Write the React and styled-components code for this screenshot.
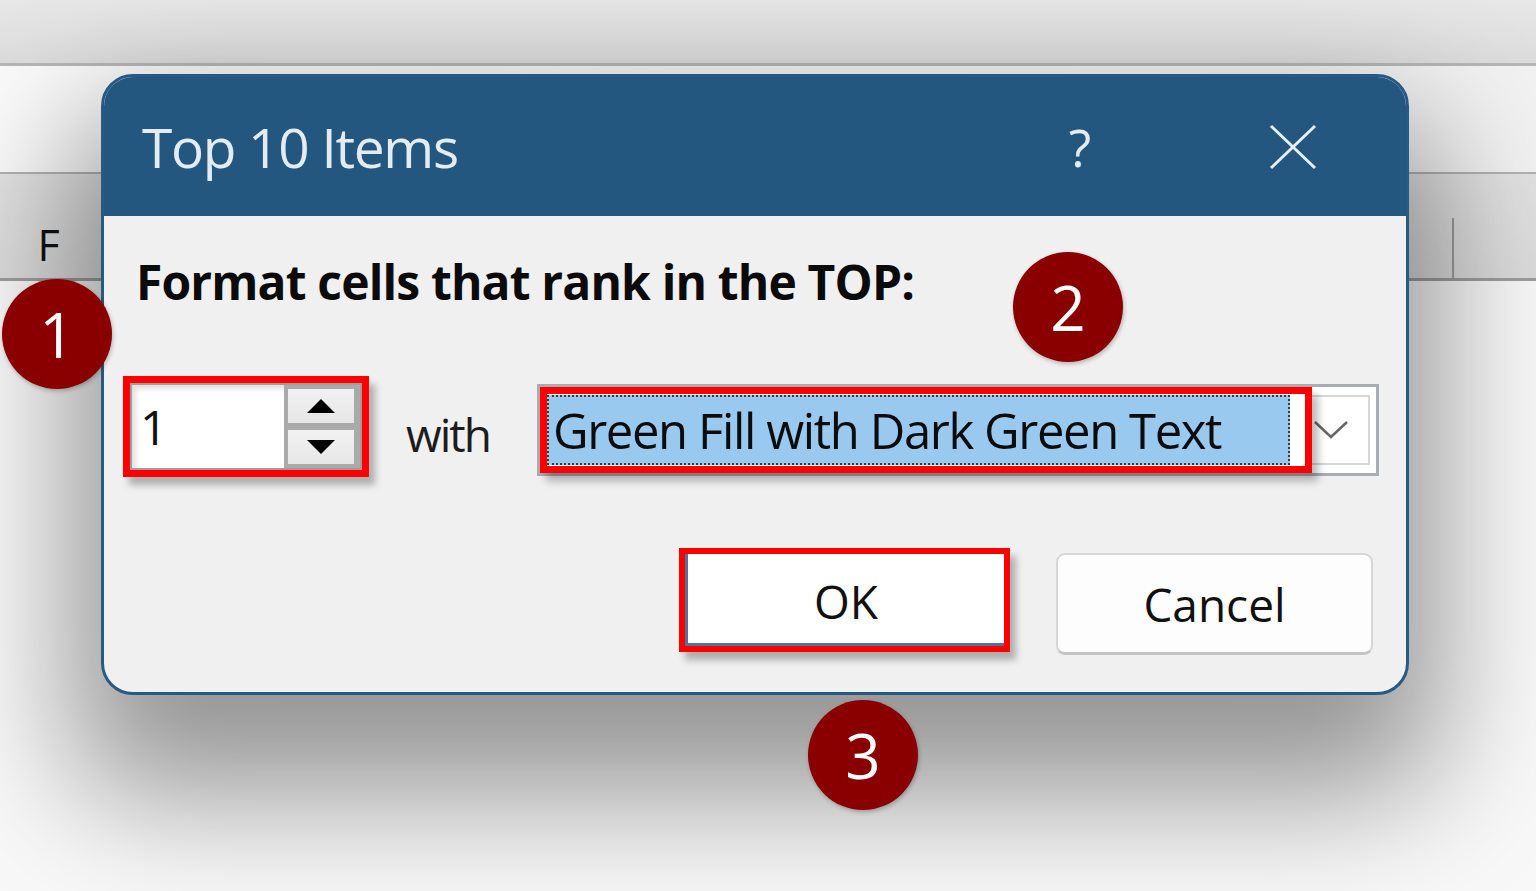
import React from "react";
import styled, { createGlobalStyle } from "styled-components";

const GlobalStyle = createGlobalStyle`
  html, body { margin: 0; padding: 0; }
  body {
    width: 1536px;
    height: 891px;
    overflow: hidden;
    background: #f6f6f6;
    font-family: "Open Sans", "Noto Sans", sans-serif;
  }
`;

const Page = styled.div`
  position: relative;
  width: 1536px;
  height: 891px;
  overflow: hidden;
  display: flex;
  flex-direction: column;
`;

const Ribbon = styled.div`
  height: 63px;
  flex-shrink: 0;
  background: linear-gradient(180deg, #e7e7e7 0%, #dcdcdc 100%);
  border-bottom: 3px solid #b6b6b6;
`;

const FormulaRow = styled.div`
  height: 106px;
  flex-shrink: 0;
  background: linear-gradient(90deg, #fafafa 0%, #f2f2f2 100%);
  border-bottom: 2px solid #b2b2b2;
`;

const HeaderRow = styled.div`
  height: 104px;
  flex-shrink: 0;
  display: flex;
  align-items: flex-end;
  background: linear-gradient(180deg, #e2e2e2 0%, #dcdcdc 100%);
  border-bottom: 3px solid #9e9e9e;
`;

const ColHeader = styled.div`
  width: 97px;
  text-align: center;
  font-size: 43px;
  line-height: 1;
  color: #111;
  padding-bottom: 12px;
`;

const HeaderCell = styled.div`
  margin-left: auto;
  width: 82px;
  height: 60px;
  border-left: 2px solid #9c9c9c;
`;

const Grid = styled.div`
  flex: 1;
  background: #f8f8f8;
`;

const Dialog = styled.div`
  position: absolute;
  left: 101px;
  top: 74px;
  width: 1308px;
  height: 621px;
  box-sizing: border-box;
  border: 3px solid #265a84;
  border-radius: 32px;
  background: #f0f0f0;
  overflow: hidden;
  display: flex;
  flex-direction: column;
  box-shadow: 0 70px 130px 30px rgba(0, 0, 0, 0.4);
`;

const TitleBar = styled.div`
  height: 139px;
  flex-shrink: 0;
  display: flex;
  align-items: center;
  background: #23577f;
  color: #e4ebf1;
  padding-left: 38px;
  padding-right: 63px;
`;

const Title = styled.div`
  flex: 1;
  font-size: 55px;
  line-height: 1;
  letter-spacing: -1.3px;
`;

const TitleButton = styled.div`
  width: 100px;
  display: flex;
  justify-content: center;
  align-items: center;
  font-size: 52px;
  line-height: 1;
  margin-left: ${(p) => p.$gap || 0}px;
`;

const Body = styled.div`
  flex: 1;
  padding: 36px 33px 0 19px;
  display: flex;
  flex-direction: column;
`;

const Heading = styled.div`
  padding-left: 13px;
  font-weight: 700;
  font-size: 48px;
  line-height: 60px;
  letter-spacing: -0.85px;
  color: #0b0b0b;
`;

const ControlRow = styled.div`
  margin-top: 64px;
  display: flex;
  align-items: flex-start;
`;

const Highlight = styled.div`
  box-sizing: border-box;
  width: ${(p) => p.$w}px;
  height: ${(p) => p.$h}px;
  border: ${(p) => p.$b || 7}px solid #ff0000;
  box-shadow: 6px 8px 7px rgba(0, 0, 0, 0.28);
  display: flex;
`;

const SpinField = styled.div`
  flex: 1;
  display: flex;
  border: 2px solid #9d9d9d;
  background: #fff;
`;

const SpinInput = styled.div`
  flex: 1;
  font-size: 48px;
  line-height: 1;
  color: #111;
  padding-left: 8px;
  display: flex;
  align-items: center;
  box-shadow: inset 7px 7px 5px -3px rgba(0, 0, 0, 0.12);
`;

const SpinnerCol = styled.div`
  width: 76px;
  display: flex;
  flex-direction: column;
  gap: 7px;
  padding: 4px 6px 4px 4px;
  box-sizing: border-box;
  background: #aaaaaa;
`;

const SpinBtn = styled.div`
  flex: 1;
  background: linear-gradient(180deg, #f2f2f2, #e6e6e6);
  display: flex;
  align-items: center;
  justify-content: center;
`;

const WithLabel = styled.div`
  margin-left: 37px;
  margin-top: 35px;
  font-size: 46px;
  line-height: 1;
  letter-spacing: -2px;
  color: #1c1c1c;
`;

const Dropdown = styled.div`
  position: relative;
  margin-left: auto;
  margin-right: -6px;
  margin-top: 8px;
  width: 842px;
  height: 92px;
  box-sizing: border-box;
  border: 3px solid #a9acb0;
  background: #fff;
  display: flex;
  padding: 8px 6px 8px 7px;
`;

const Selected = styled.div`
  width: 743px;
  box-sizing: border-box;
  background: #99c9ef;
  border: 2px dotted #3a3a3a;
  font-size: 49px;
  line-height: 1;
  letter-spacing: -1.4px;
  white-space: nowrap;
  overflow: hidden;
  color: #0c0c0c;
  padding-left: 4px;
  display: flex;
  align-items: center;
`;

const ArrowBtn = styled.div`
  margin-left: auto;
  width: 60px;
  box-sizing: border-box;
  border: 2px solid #d6d6d6;
  display: flex;
  align-items: center;
  justify-content: flex-start;
  padding-left: 1px;
`;

const DropHighlight = styled.div`
  position: absolute;
  left: 0;
  top: 0;
  width: 772px;
  height: 86px;
  box-sizing: border-box;
  border: 7px solid #ff0000;
  box-shadow: 6px 8px 8px rgba(0, 0, 0, 0.28);
`;

const ButtonRow = styled.div`
  margin-top: 71px;
  display: flex;
  justify-content: flex-end;
  align-items: flex-start;
  gap: 46px;
`;

const OkButton = styled.div`
  flex: 1;
  background: #ffffff;
  border-left: 3px solid #4b74a0;
  border-bottom: 3px solid #4b74a0;
  display: flex;
  align-items: center;
  justify-content: center;
  font-size: 46px;
  line-height: 1;
  color: #111;
  padding-top: 4px;
`;

const CancelButton = styled.div`
  margin-top: 5px;
  width: 317px;
  height: 102px;
  box-sizing: border-box;
  border: 2px solid #d6d6d6;
  border-bottom: 3px solid #c4c4c4;
  border-radius: 9px;
  background: #fdfdfd;
  display: flex;
  align-items: center;
  justify-content: center;
  font-size: 46px;
  line-height: 1;
  color: #111;
`;

const Badge = styled.div`
  position: absolute;
  left: ${(p) => p.$x - 55}px;
  top: ${(p) => p.$y - 55}px;
  width: 110px;
  height: 110px;
  border-radius: 50%;
  background: #8a0000;
  color: #ffffff;
  font-size: 62px;
  line-height: 1;
  display: flex;
  align-items: center;
  justify-content: center;
  box-shadow: 1px 2px 4px rgba(0, 0, 0, 0.25);
`;

export default function App() {
  return (
    <>
      <GlobalStyle />
      <Page>
        <Ribbon />
        <FormulaRow />
        <HeaderRow>
          <ColHeader>F</ColHeader>
          <HeaderCell />
        </HeaderRow>
        <Grid />

        <Dialog>
          <TitleBar>
            <Title>Top 10 Items</Title>
            <TitleButton>?</TitleButton>
            <TitleButton $gap={113}>
              <svg width="48" height="46" viewBox="0 0 48 46">
                <path d="M2 2 L46 44 M46 2 L2 44" stroke="#e8eef3" strokeWidth="3" fill="none" />
              </svg>
            </TitleButton>
          </TitleBar>
          <Body>
            <Heading>Format cells that rank in the TOP:</Heading>
            <ControlRow>
              <Highlight $w={246} $h={101}>
                <SpinField>
                  <SpinInput>1</SpinInput>
                  <SpinnerCol>
                    <SpinBtn>
                      <svg width="28" height="14" viewBox="0 0 28 14">
                        <path d="M14 0 L28 14 L0 14 Z" fill="#000" />
                      </svg>
                    </SpinBtn>
                    <SpinBtn>
                      <svg width="28" height="14" viewBox="0 0 28 14">
                        <path d="M0 0 L28 0 L14 14 Z" fill="#000" />
                      </svg>
                    </SpinBtn>
                  </SpinnerCol>
                </SpinField>
              </Highlight>
              <WithLabel>with</WithLabel>
              <Dropdown>
                <Selected>Green Fill with Dark Green Text</Selected>
                <ArrowBtn>
                  <svg width="36" height="20" viewBox="0 0 36 20">
                    <path d="M2 2 L18 17 L34 2" stroke="#666" strokeWidth="2.5" fill="none" />
                  </svg>
                </ArrowBtn>
                <DropHighlight />
              </Dropdown>
            </ControlRow>
            <ButtonRow>
              <Highlight $w={331} $h={104} $b={6}>
                <OkButton>OK</OkButton>
              </Highlight>
              <CancelButton>Cancel</CancelButton>
            </ButtonRow>
          </Body>
        </Dialog>

        <Badge $x={57} $y={334}>1</Badge>
        <Badge $x={1068} $y={307}>2</Badge>
        <Badge $x={863} $y={755}>3</Badge>
      </Page>
    </>
  );
}
